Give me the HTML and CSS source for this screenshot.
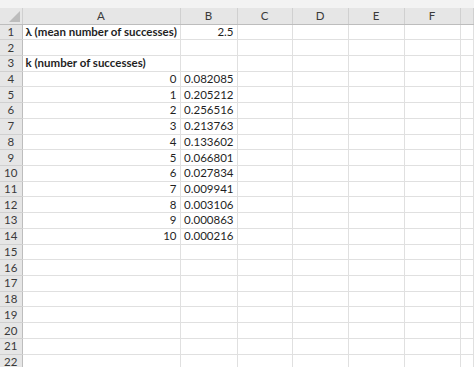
FILE: index.html
```html
<!DOCTYPE html>
<html lang="en">
<head>
    <meta charset="UTF-8">
    <title>Poisson distribution - sheet</title>
    <link rel="stylesheet" href="styles.css">
</head>
<body>
    <div class="top-strip"></div>
    <table class="sheet">
        <colgroup>
            <col class="col-rh">
            <col class="col-a">
            <col class="col-b">
            <col class="col-c">
            <col class="col-d">
            <col class="col-e">
            <col class="col-f">
            <col>
        </colgroup>
        <thead>
            <tr>
                <th class="corner"><span class="corner-tri"></span></th>
                <th>A</th>
                <th>B</th>
                <th>C</th>
                <th>D</th>
                <th>E</th>
                <th>F</th>
                <th></th>
            </tr>
        </thead>
        <tbody id="rows">
            <tr><th>1</th><td class="bold">λ (mean number of successes)</td><td class="num">2.5</td><td></td><td></td><td></td><td></td><td></td></tr>
            <tr><th>2</th><td></td><td></td><td></td><td></td><td></td><td></td><td></td></tr>
            <tr><th>3</th><td class="bold">k (number of successes)</td><td></td><td></td><td></td><td></td><td></td><td></td></tr>
            <tr><th>4</th><td class="num">0</td><td class="num">0.082085</td><td></td><td></td><td></td><td></td><td></td></tr>
            <tr><th>5</th><td class="num">1</td><td class="num">0.205212</td><td></td><td></td><td></td><td></td><td></td></tr>
            <tr><th>6</th><td class="num">2</td><td class="num">0.256516</td><td></td><td></td><td></td><td></td><td></td></tr>
            <tr><th>7</th><td class="num">3</td><td class="num">0.213763</td><td></td><td></td><td></td><td></td><td></td></tr>
            <tr><th>8</th><td class="num">4</td><td class="num">0.133602</td><td></td><td></td><td></td><td></td><td></td></tr>
            <tr><th>9</th><td class="num">5</td><td class="num">0.066801</td><td></td><td></td><td></td><td></td><td></td></tr>
            <tr><th>10</th><td class="num">6</td><td class="num">0.027834</td><td></td><td></td><td></td><td></td><td></td></tr>
            <tr><th>11</th><td class="num">7</td><td class="num">0.009941</td><td></td><td></td><td></td><td></td><td></td></tr>
            <tr><th>12</th><td class="num">8</td><td class="num">0.003106</td><td></td><td></td><td></td><td></td><td></td></tr>
            <tr><th>13</th><td class="num">9</td><td class="num">0.000863</td><td></td><td></td><td></td><td></td><td></td></tr>
            <tr><th>14</th><td class="num">10</td><td class="num">0.000216</td><td></td><td></td><td></td><td></td><td></td></tr>
            <tr><th>15</th><td></td><td></td><td></td><td></td><td></td><td></td><td></td></tr>
            <tr><th>16</th><td></td><td></td><td></td><td></td><td></td><td></td><td></td></tr>
            <tr><th>17</th><td></td><td></td><td></td><td></td><td></td><td></td><td></td></tr>
            <tr><th>18</th><td></td><td></td><td></td><td></td><td></td><td></td><td></td></tr>
            <tr><th>19</th><td></td><td></td><td></td><td></td><td></td><td></td><td></td></tr>
            <tr><th>20</th><td></td><td></td><td></td><td></td><td></td><td></td><td></td></tr>
            <tr><th>21</th><td></td><td></td><td></td><td></td><td></td><td></td><td></td></tr>
            <tr><th>22</th><td></td><td></td><td></td><td></td><td></td><td></td><td></td></tr>
        </tbody>
    </table>
</body>
</html>
```

FILE: styles.css
```css
* {
    margin: 0;
    padding: 0;
    box-sizing: border-box;
}

body {
    font-family: Lato, "Open Sans", sans-serif;
    font-size: 11.5px;
    color: #1f1f1f;
    background: #fff;
    overflow: hidden;
}

.top-strip {
    height: 8px;
    background: #f3f3f3;
}

.sheet {
    border-collapse: collapse;
    table-layout: fixed;
    width: 100%;
}

.col-rh { width: 22px; }
.col-a { width: 158px; }
.col-b { width: 57px; }
.col-c { width: 55px; }
.col-d { width: 56px; }
.col-e { width: 56px; }
.col-f { width: 56px; }

.sheet tr {
    height: 15.72px;
}

.sheet thead tr {
    height: 16px;
}

.sheet th {
    background: #e6e6e6;
    color: #3a3a3a;
    font-weight: normal;
    text-align: center;
    border-right: 1px solid #d0d0d0;
    border-bottom: 1px solid #d0d0d0;
    line-height: 14px;
    padding: 0;
}

.sheet thead th {
    border-bottom: 1px solid #bdbdbd;
}

.sheet tbody th {
    border-right: 1px solid #bdbdbd;
}

.sheet td {
    border-right: 1px solid #e0e0e0;
    border-bottom: 1px solid #e0e0e0;
    line-height: 14px;
    padding: 0 3px;
    white-space: nowrap;
    overflow: visible;
}

.sheet td.num {
    text-align: right;
}

.sheet td.bold {
    font-weight: bold;
}

.corner {
    position: relative;
}

.corner-tri {
    position: absolute;
    right: 2px;
    bottom: 2px;
    width: 0;
    height: 0;
    border-left: 11px solid transparent;
    border-bottom: 11px solid #bcbcbc;
}
```
